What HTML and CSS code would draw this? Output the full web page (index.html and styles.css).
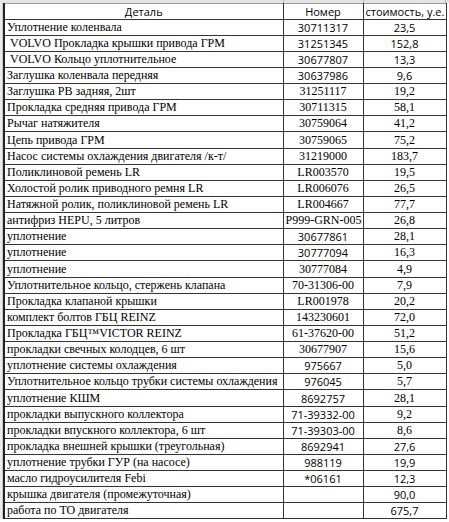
FILE: index.html
```html
<!DOCTYPE html>
<html lang="ru">
<head>
<meta charset="utf-8">
<title>Детали</title>
<link rel="stylesheet" href="styles.css">
</head>
<body>
<div class="sheet">
  <div class="colhead"><span class="ch c1"></span><span class="ch c2"></span><span class="ch c3"></span></div>
  <div class="main">
    <div class="rowhead"></div>
    <table class="parts">
      <colgroup><col class="w1"><col class="w2"><col class="w3"></colgroup>
      <thead>
        <tr><th class="sans">Деталь</th><th class="sans">Номер</th><th class="sans">стоимость, у.е.</th></tr>
      </thead>
      <tbody>
        <tr><td>Уплотнение коленвала</td><td class="sans">30711317</td><td class="sans">23,5</td></tr>
        <tr><td>&nbsp;VOLVO Прокладка крышки привода ГРМ</td><td class="sans">31251345</td><td class="sans">152,8</td></tr>
        <tr><td>&nbsp;VOLVO Кольцо уплотнительное</td><td class="sans">30677807</td><td class="sans">13,3</td></tr>
        <tr><td>Заглушка коленвала передняя</td><td class="sans">30637986</td><td class="sans">9,6</td></tr>
        <tr><td>Заглушка РВ задняя, 2шт</td><td>31251117</td><td>19,2</td></tr>
        <tr><td>Прокладка средняя привода ГРМ</td><td>30711315</td><td>58,1</td></tr>
        <tr><td>Рычаг натяжителя</td><td>30759064</td><td>41,2</td></tr>
        <tr><td>Цепь привода ГРМ</td><td>30759065</td><td>75,2</td></tr>
        <tr><td>Насос системы охлаждения двигателя /к-т/</td><td>31219000</td><td>183,7</td></tr>
        <tr><td>Поликлиновой ремень LR</td><td>LR003570</td><td>19,5</td></tr>
        <tr><td>Холостой ролик приводного ремня LR</td><td>LR006076</td><td>26,5</td></tr>
        <tr><td>Натяжной ролик, поликлиновой ремень LR</td><td>LR004667</td><td>77,7</td></tr>
        <tr><td>антифриз HEPU, 5 литров</td><td>P999-GRN-005</td><td>26,8</td></tr>
        <tr><td>уплотнение</td><td class="sans">30677861</td><td>28,1</td></tr>
        <tr><td>уплотнение</td><td class="sans">30777094</td><td>16,3</td></tr>
        <tr><td>уплотнение</td><td>30777084</td><td>4,9</td></tr>
        <tr><td>Уплотнительное кольцо, стержень клапана</td><td>70-31306-00</td><td>7,9</td></tr>
        <tr><td>Прокладка клапаной крышки</td><td>LR001978</td><td>20,2</td></tr>
        <tr><td>комплект болтов ГБЦ REINZ</td><td>143230601</td><td>72,0</td></tr>
        <tr><td>Прокладка ГБЦ™VICTOR REINZ</td><td>61-37620-00</td><td>51,2</td></tr>
        <tr><td>прокладки свечных колодцев, 6 шт</td><td>30677907</td><td>15,6</td></tr>
        <tr><td>уплотнение системы охлаждения</td><td class="sans">975667</td><td>5,0</td></tr>
        <tr><td>Уплотнительное кольцо трубки системы охлаждения</td><td class="sans">976045</td><td>5,7</td></tr>
        <tr><td>уплотнение КШМ</td><td class="sans">8692757</td><td>28,1</td></tr>
        <tr><td>прокладки выпускного коллектора</td><td class="sans">71-39332-00</td><td>9,2</td></tr>
        <tr><td>прокладки впускного коллектора, 6 шт</td><td class="sans">71-39303-00</td><td>8,6</td></tr>
        <tr><td>прокладка внешней крышки (треугольная)</td><td class="sans">8692941</td><td class="sans">27,6</td></tr>
        <tr><td>уплотнение трубки ГУР (на насосе)</td><td class="sans">988119</td><td class="sans">19,9</td></tr>
        <tr><td>масло гидроусилителя Febi</td><td class="sans">*06161</td><td class="sans">12,3</td></tr>
        <tr><td>крышка двигателя (промежуточная)</td><td></td><td class="sans">90,0</td></tr>
        <tr><td>работа по ТО двигателя</td><td></td><td class="sans">675,7</td></tr>
      </tbody>
    </table>
  </div>
</div>
</body>
</html>
```

FILE: styles.css
```css
html, body {
  margin: 0;
  padding: 0;
  background: #ffffff;
}

.sheet {
  display: flex;
  flex-direction: column;
  width: 449px;
}

.colhead {
  display: flex;
  height: 3px;
  background: #e4e4e4;
  padding-left: 4px;
}

.ch {
  display: block;
  height: 3px;
  border-right: 1px solid #b8b8b8;
  box-sizing: border-box;
}
.ch.c1 { width: 280px; }
.ch.c2 { width: 80px; }
.ch.c3 { width: 82px; }

.main {
  display: flex;
  align-items: flex-start;
}

.rowhead {
  width: 3px;
  align-self: stretch;
  background: #ececec;
  border-right: 1px solid #c8c8c8;
  box-sizing: border-box;
}

.parts {
  border-collapse: collapse;
  table-layout: fixed;
  width: 442px;
  font-family: "Liberation Serif", "Times New Roman", serif;
  font-size: 12px;
  color: #000;
}

.w1 { width: 279px; }
.w2 { width: 80px; }
.w3 { width: 83px; }

.parts th,
.parts td {
  border: 1px solid #333;
  padding: 0 2px;
  height: 15px;
  line-height: 15px;
  white-space: nowrap;
  overflow: hidden;
  vertical-align: middle;
}

.parts th {
  font-weight: normal;
  text-align: center;
  border-top-color: #9a9a9a;
}

.parts td {
  text-align: center;
}

.parts td:first-child {
  text-align: left;
  border-left: 2px solid #222;
}
.parts th:first-child {
  border-left: 2px solid #222;
}

.parts tbody tr:nth-child(8n) td {
  height: 16px;
}

.sans {
  font-family: "Open Sans", "Liberation Sans", sans-serif;
  font-size: 11px;
}
```
